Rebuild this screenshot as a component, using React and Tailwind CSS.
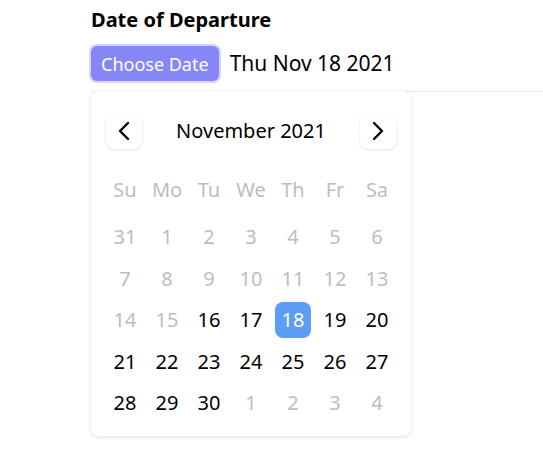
import { ChevronLeft, ChevronRight } from 'lucide-react';

const weekDays = ['Su', 'Mo', 'Tu', 'We', 'Th', 'Fr', 'Sa'];

// days before 16 are disabled, 1-4 at the end are next month
const weeks = [
    [31, 1, 2, 3, 4, 5, 6],
    [7, 8, 9, 10, 11, 12, 13],
    [14, 15, 16, 17, 18, 19, 20],
    [21, 22, 23, 24, 25, 26, 27],
    [28, 29, 30, 1, 2, 3, 4],
];

function DayCell({ day, muted, selected }) {
    let cls = 'text-black';
    if (muted) cls = 'text-[#bdbdbd]';
    if (selected) cls = 'bg-[#5c9df5] text-white rounded-lg';
    return (
        <div className="flex items-center justify-center h-[41.5px]">
            <span className={`flex items-center justify-center w-9 h-9 ${cls}`}>{day}</span>
        </div>
    );
}

function App() {
    return (
        <div className="min-h-screen bg-white text-black" style={{ fontFamily: '"Noto Sans", "Open Sans", sans-serif' }}>
            <div className="pt-[6px] pl-[91px]">
                <h2 className="text-[20px] font-bold leading-[28px]">Date of Departure</h2>
                <div className="flex items-center gap-[11px] mt-[12px]">
                    <button className="h-[35px] px-[10px] rounded-md bg-[#8487f5] text-white text-[18px] leading-none ring-2 ring-[#d3d5fc]">
                        Choose Date
                    </button>
                    <span className="text-[21px]">Thu Nov 18 2021</span>
                </div>
                <div className="mt-[10px] border-t border-[#ededed]">
                    <div className="w-[320px] -mt-px rounded-lg bg-white shadow-[0_1px_4px_rgba(0,0,0,0.13)] px-[13px] pt-[22px] pb-[12px]">
                        <div className="flex items-center justify-between px-[2px]">
                            <button className="w-9 h-9 flex items-center justify-center rounded-lg bg-white shadow-[0_1px_3px_rgba(0,0,0,0.12)]">
                                <ChevronLeft size={32} strokeWidth={1.8} />
                            </button>
                            <span className="text-[20px]">November 2021</span>
                            <button className="w-9 h-9 flex items-center justify-center rounded-lg bg-white shadow-[0_1px_3px_rgba(0,0,0,0.12)]">
                                <ChevronRight size={32} strokeWidth={1.8} />
                            </button>
                        </div>
                        <div className="grid grid-cols-7 mt-[20px] text-[20px]">
                            {weekDays.map(d => (
                                <div key={d} className="flex items-center justify-center h-[41.5px] text-[#bdbdbd]">{d}</div>
                            ))}
                        </div>
                        <div className="grid grid-cols-7 mt-[6px] text-[20px]">
                            {weeks.map((week, wi) =>
                                week.map((day, di) => {
                                    const muted = wi < 2 || (wi === 2 && day < 16) || (wi === 4 && day < 10);
                                    return <DayCell key={`${wi}-${di}`} day={day} muted={muted} selected={wi === 2 && day === 18} />;
                                })
                            )}
                        </div>
                    </div>
                </div>
            </div>
        </div>
    );
}

export default App;
